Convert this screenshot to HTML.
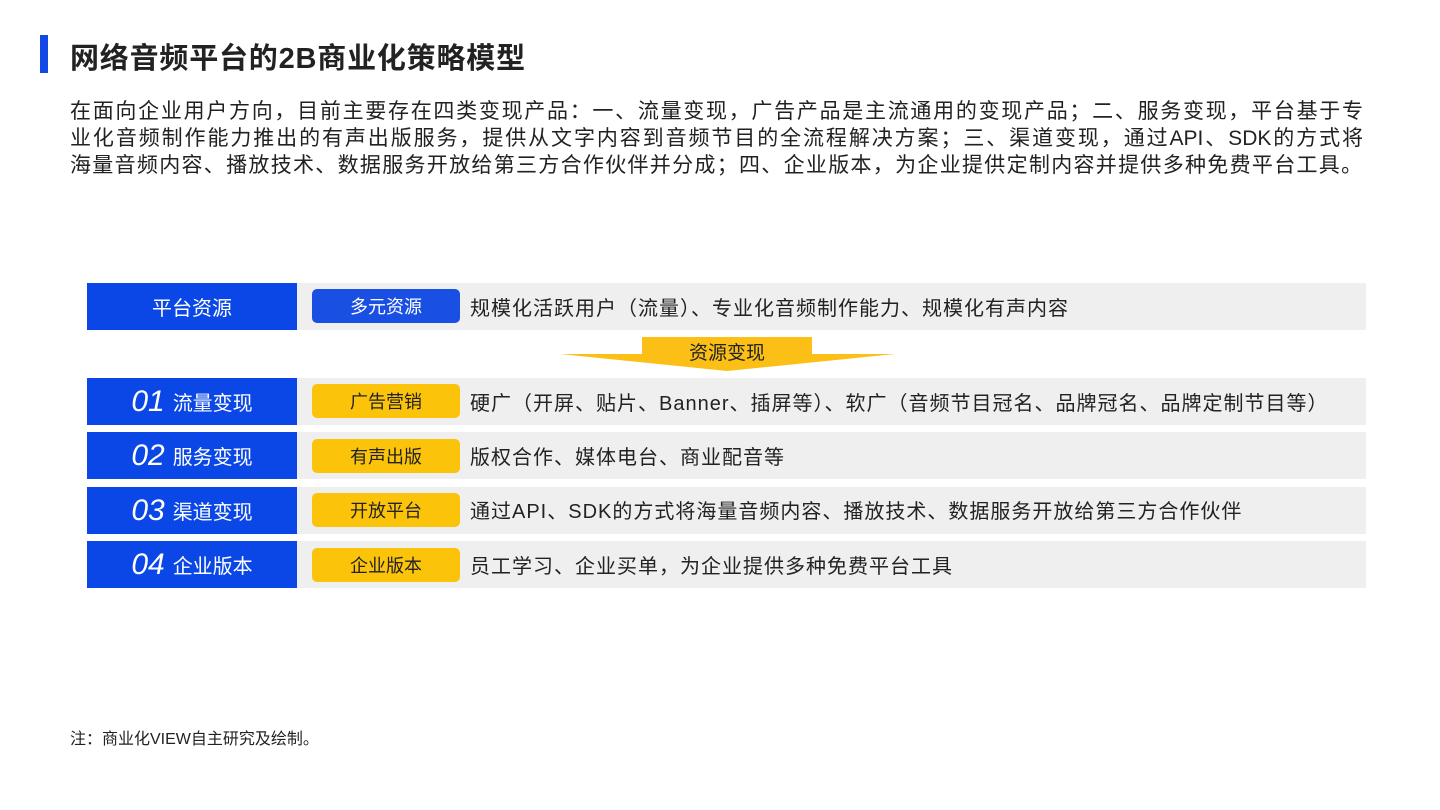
<!DOCTYPE html>
<html><head><meta charset="utf-8"><style>
body{margin:0;width:1440px;height:810px;background:#fff;font-family:"Liberation Sans","Noto Sans CJK SC",sans-serif;position:relative;overflow:hidden;color:#222}
.a{position:absolute}
.bar{left:40px;top:35px;width:8px;height:38px;background:#1248e6}
.title{left:70px;top:35px;font-size:29px;font-weight:bold;color:#222;letter-spacing:0.8px}
.pl{left:70px;width:1293px;font-size:21px;line-height:27px;color:#222;text-align:justify;text-align-last:justify;white-space:nowrap}
.gray{left:296px;width:1070px;background:#efefef}
.blue{left:87px;width:210px;background:#0a47e6;color:#fff;font-size:20px;display:flex;align-items:center;justify-content:center}
.blue i{font-size:30px;margin-right:8px;font-style:italic}
.pill{left:312px;width:148px;height:34px;border-radius:5px;font-size:18px;display:flex;align-items:center;justify-content:center}
.y{background:#fcc30b;color:#222}
.b{background:#1a4fe3;color:#fff}
.txt{left:470px;font-size:20px;color:#222;letter-spacing:1px}
</style></head><body>
<div class="a bar"></div>
<div class="a title">网络音频平台的2B商业化策略模型</div>
<div class="a pl" style="top:98px">在面向企业用户方向，目前主要存在四类变现产品：一、流量变现，广告产品是主流通用的变现产品；二、服务变现，平台基于专</div>
<div class="a pl" style="top:125px">业化音频制作能力推出的有声出版服务，提供从文字内容到音频节目的全流程解决方案；三、渠道变现，通过API、SDK的方式将</div>
<div class="a" style="left:70px;top:152px;font-size:21px;line-height:27px;letter-spacing:1.3px;white-space:nowrap">海量音频内容、播放技术、数据服务开放给第三方合作伙伴并分成；四、企业版本，为企业提供定制内容并提供多种免费平台工具。</div>

<div class="a gray" style="top:283px;height:47px"></div>
<div class="a blue" style="top:283px;height:47px">平台资源</div>
<div class="a pill b" style="top:289px">多元资源</div>
<div class="a txt" style="top:292px">规模化活跃用户（流量）、专业化音频制作能力、规模化有声内容</div>

<svg class="a" style="left:555px;top:335px" width="345" height="38"><polygon points="87,2 257,2 257,19 340,19 172,36 5,19 87,19" fill="#fbbf16"/></svg>
<div class="a" style="left:642px;top:338px;width:170px;text-align:center;font-size:19px;color:#222">资源变现</div>

<div class="a gray" style="top:378px;height:47px"></div>
<div class="a blue" style="top:378px;height:47px"><i>01</i>流量变现</div>
<div class="a pill y" style="top:384px">广告营销</div>
<div class="a txt" style="top:387px">硬广（开屏、贴片、Banner、插屏等）、软广（音频节目冠名、品牌冠名、品牌定制节目等）</div>

<div class="a gray" style="top:432px;height:47px"></div>
<div class="a blue" style="top:432px;height:47px"><i>02</i>服务变现</div>
<div class="a pill y" style="top:439px">有声出版</div>
<div class="a txt" style="top:441px">版权合作、媒体电台、商业配音等</div>

<div class="a gray" style="top:487px;height:47px"></div>
<div class="a blue" style="top:487px;height:47px"><i>03</i>渠道变现</div>
<div class="a pill y" style="top:493px">开放平台</div>
<div class="a txt" style="top:495px">通过API、SDK的方式将海量音频内容、播放技术、数据服务开放给第三方合作伙伴</div>

<div class="a gray" style="top:541px;height:47px"></div>
<div class="a blue" style="top:541px;height:47px"><i>04</i>企业版本</div>
<div class="a pill y" style="top:548px">企业版本</div>
<div class="a txt" style="top:550px">员工学习、企业买单，为企业提供多种免费平台工具</div>

<div class="a" style="left:70px;top:725px;font-size:16px;color:#222">注：商业化VIEW自主研究及绘制。</div>
</body></html>
